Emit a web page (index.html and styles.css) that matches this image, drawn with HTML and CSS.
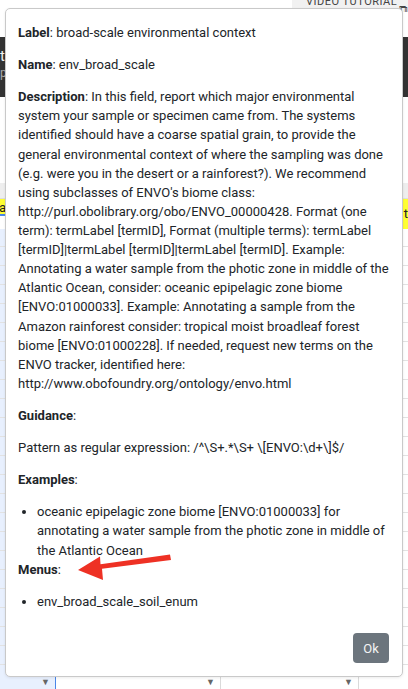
FILE: index.html
```html
<!DOCTYPE html>
<html>
<head>
<meta charset="utf-8">
<link rel="stylesheet" href="styles.css">
</head>
<body>
<div class="page">
  <div class="topbar">
    <div class="tab"><span class="tab-text">VIDEO TUTORIAL</span><span class="ext">⧉</span></div>
  </div>
  <div class="darkbar">
    <div class="dark-title">t</div>
    <div class="dark-sub">p</div>
  </div>
  <div class="gap"></div>
  <div class="headrow"></div>
  <div class="yellowrow">
    <div class="ycell-left">al</div>
    <div class="ycell-mid"></div>
    <div class="ycell-right">t</div>
  </div>
  <div class="grid">
    <div class="gcol first"></div>
    <div class="gcol"></div>
    <div class="gcol"></div>
    <div class="gcol last"></div>
  </div>
  <div class="bottomrow">
    <div class="bcell first"><span class="tri">▼</span></div>
    <div class="bcell w2"><span class="tri">▼</span></div>
    <div class="bcell w3"><span class="tri">▼</span></div>
    <div class="bcell rest"></div>
  </div>
</div>

<div class="modal">
  <div class="modal-body">
    <p><b>Label</b>: broad-scale environmental context</p>
    <p><b>Name</b>: env_broad_scale</p>
    <p><b>Description</b>: In this field, report which major environmental system your sample or specimen came from. The systems identified should have a coarse spatial grain, to provide the general environmental context of where the sampling was done (e.g. were you in the desert or a rainforest?). We recommend using subclasses of ENVO's biome class: http://purl.obolibrary.org/obo/ENVO_00000428. Format (one term): termLabel [termID], Format (multiple terms): termLabel [termID]|termLabel [termID]|termLabel [termID]. Example: Annotating a water sample from the photic zone in middle of the Atlantic Ocean, consider: oceanic epipelagic zone biome [ENVO:01000033]. Example: Annotating a sample from the Amazon rainforest consider: tropical moist broadleaf forest biome [ENVO:01000228]. If needed, request new terms on the ENVO tracker, identified here: http://www.obofoundry.org/ontology/envo.html</p>
    <p><b>Guidance</b>:</p>
    <p>Pattern as regular expression: /^\S+.*\S+ \[ENVO:\d+\]$/</p>
    <p><b>Examples</b>:</p>
    <ul>
      <li>oceanic epipelagic zone biome [ENVO:01000033] for annotating a water sample from the photic zone in middle of the Atlantic Ocean</li>
    </ul>
    <p><b>Menus</b>:</p>
    <ul>
      <li>env_broad_scale_soil_enum</li>
    </ul>
  </div>
  <div class="modal-footer">
    <button class="btn-ok">Ok</button>
  </div>
</div>

<svg class="arrow" width="408" height="689" viewBox="0 0 408 689">
  <polygon points="78,570 100,556.5 100.5,564.3 170,554.5 171,560 102,568.8 103,580" fill="#ee3124"/>
</svg>
</body>
</html>
```

FILE: styles.css
```css
* { box-sizing: border-box; }
html, body {
  margin: 0;
  padding: 0;
  width: 408px;
  height: 689px;
  overflow: hidden;
  background: #ffffff;
  font-family: Roboto, "Liberation Sans", Arial, sans-serif;
}
.page {
  display: flex;
  flex-direction: column;
  height: 689px;
}
.topbar {
  height: 37px;
  display: flex;
  justify-content: flex-end;
}
.tab {
  width: 116px;
  height: 12px;
  background: #f1f1f1;
  display: flex;
  align-items: flex-start;
  justify-content: space-between;
  padding: 0 0 0 14px;
  overflow: hidden;
}
.tab-text {
  font-size: 11px;
  line-height: 11px;
  color: #444;
  letter-spacing: 0.5px;
  margin-top: -4px;
}
.ext {
  font-size: 12px;
  line-height: 12px;
  color: #444;
  margin-top: 4px;
}
.darkbar {
  height: 60px;
  background: #333333;
  color: #dddddd;
  padding-top: 11px;
  font-size: 15px;
  line-height: 17px;
}
.dark-title { color: #f2f2f2; }
.dark-sub { font-size: 12px; color: #aaaaaa; }
.gap { height: 86px; }
.headrow {
  height: 16px;
  background: #eeeeee;
  border-bottom: 1px solid #dddddd;
}
.yellowrow {
  height: 30px;
  display: flex;
  font-size: 13px;
  color: #222;
}
.ycell-left {
  width: 55px;
  height: 17px;
  background: #ffff33;
  border-bottom: 2px solid #4a86e8;
  line-height: 17px;
  text-indent: -1px;
}
.ycell-mid { flex: 1; }
.ycell-right {
  width: 40px;
  background: #ffff33;
  text-align: right;
  line-height: 30px;
  direction: rtl;
}
.grid {
  flex: 1;
  display: flex;
}
.gcol {
  width: 165px;
  background-image: repeating-linear-gradient(to bottom, transparent 0, transparent 18px, #e2e2e2 18px, #e2e2e2 19px);
  background-position: 0 -1px;
  border-right: 1px solid #e2e2e2;
}
.gcol.first {
  width: 55px;
  background-color: #e8f0fe;
  border-right: 1px solid #4a86e8;
}
.gcol.last {
  flex: 1;
  border-right: none;
  border-left: 1px solid #cccccc;
}
.bottomrow {
  height: 13px;
  display: flex;
}
.bcell {
  display: flex;
  justify-content: flex-end;
  align-items: center;
  padding-right: 5px;
  border-right: 1px solid #dadada;
}
.bcell.first { width: 56px; background: #e8f0fe; border-right: 1px solid #4a86e8; }
.bcell.w2 { width: 165px; }
.bcell.w3 { width: 138px; }
.bcell.rest { flex: 1; border-right: none; }
.tri {
  font-size: 9px;
  color: #666666;
  line-height: 9px;
}

.modal {
  position: absolute;
  left: 5px;
  top: 8px;
  width: 398px;
  height: 669px;
  background: #ffffff;
  border: 1px solid #c9c9c9;
  border-radius: 5px;
  box-shadow: 0 1px 3px rgba(0,0,0,0.08);
  padding: 14px 12px 13px 12px;
  display: flex;
  flex-direction: column;
  color: #212529;
  font-size: 13px;
  line-height: 1.47;
}
.modal-body p {
  margin: 0 0 13px 0;
}
.modal-body ul {
  margin: 0;
  padding-left: 19px;
}
.modal-body b { font-weight: 700; }
.modal-footer {
  margin-top: auto;
  display: flex;
  justify-content: flex-end;
  padding-right: 1px;
}
.btn-ok {
  width: 36px;
  height: 30px;
  background: #6c757d;
  color: #f4f4f4;
  border: none;
  border-radius: 4px;
  font-family: Roboto, "Liberation Sans", Arial, sans-serif;
  font-size: 13px;
  padding: 0;
}
.arrow {
  position: absolute;
  left: 0;
  top: 0;
  pointer-events: none;
}
```
